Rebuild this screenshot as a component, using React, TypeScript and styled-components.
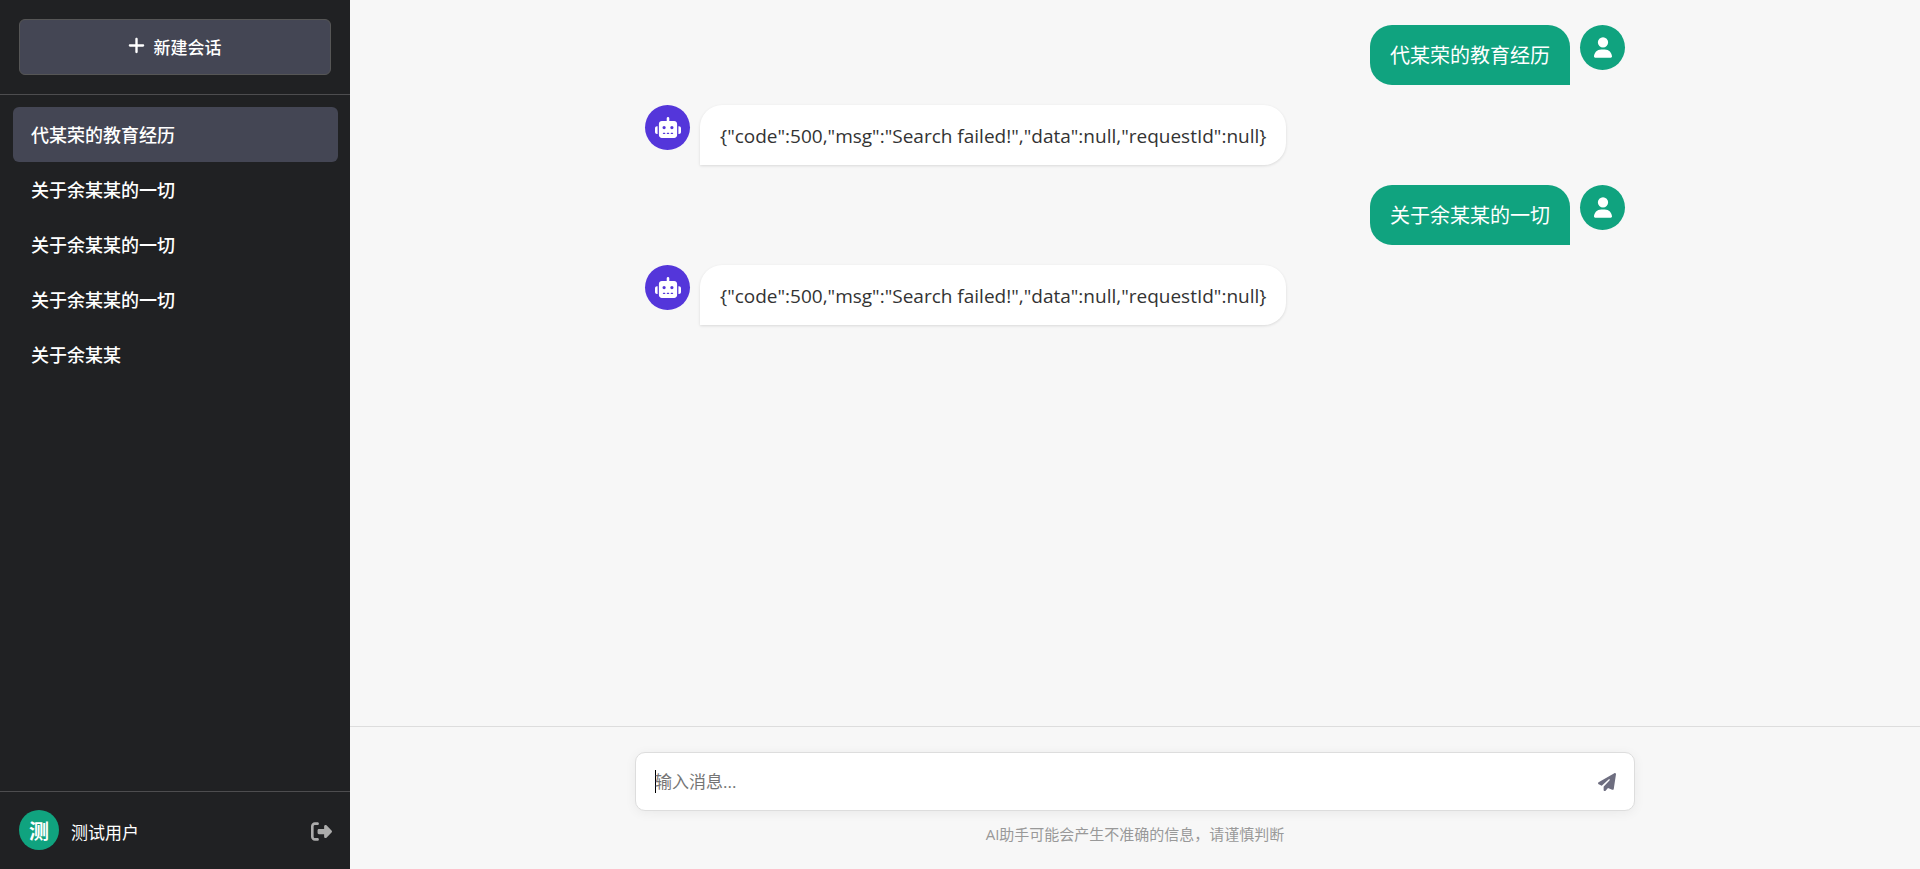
import React, { useState } from "react";
import styled, { createGlobalStyle } from "styled-components";
import { FaPlus, FaPaperPlane, FaRightFromBracket, FaRobot, FaUser } from "react-icons/fa6";

const GlobalStyle = createGlobalStyle`
  * { box-sizing: border-box; }
  body { margin: 0; }
  body, button, input {
    font-family: "Segoe UI", "Open Sans", "Noto Sans CJK SC", sans-serif;
  }
`;

const Page = styled.div`
  display: flex;
  height: 100vh;
  background: #f7f7f7;
  color: #343541;
`;

const Sidebar = styled.aside`
  flex: 0 0 350px;
  display: flex;
  flex-direction: column;
  background: #202123;
  color: #fff;
`;

const SidebarHeader = styled.div`
  padding: 19px;
  border-bottom: 1px solid #4d4d4f;
`;

const NewChatButton = styled.button`
  display: flex;
  align-items: center;
  justify-content: center;
  gap: 8px;
  width: 100%;
  height: 56px;
  padding: 0 2px 2px 0;
  border: 1px solid #565656;
  border-radius: 6px;
  background: #444654;
  color: #fff;
  font-size: 17px;
  font-weight: 500;
  cursor: pointer;

  svg {
    width: 19px;
    height: 19px;
    margin-bottom: 2px;
  }
`;

const ChatList = styled.nav`
  flex: 1;
  display: flex;
  flex-direction: column;
  padding: 12px 12px 12px 13px;
  overflow-y: auto;
`;

const ChatItem = styled.button<{ $active: boolean }>`
  height: 55px;
  flex-shrink: 0;
  padding: 0 18px 1px;
  border: 0;
  border-radius: 6px;
  background: ${(p) => (p.$active ? "#444654" : "transparent")};
  color: #fff;
  font-size: 18px;
  font-weight: 500;
  text-align: left;
  cursor: pointer;
`;

const SidebarFooter = styled.div`
  display: flex;
  align-items: center;
  gap: 12px;
  padding: 18px 18px 19px 19px;
  border-top: 1px solid #4d4d4f;
`;

const UserBadge = styled.span`
  display: grid;
  place-items: center;
  width: 40px;
  height: 40px;
  border-radius: 50%;
  background: #10a37f;
  font-size: 20px;
  font-weight: 700;
`;

const UserName = styled.span`
  flex: 1;
  padding-top: 2px;
  font-size: 17px;
`;

const IconButton = styled.button<{ $color: string; $size: number }>`
  display: grid;
  place-items: center;
  padding: 0;
  border: 0;
  background: none;
  color: ${(p) => p.$color};
  font-size: ${(p) => p.$size}px;
  cursor: pointer;
`;

const LogoutButton = styled(IconButton)`
  padding-top: 2px;
`;

const Main = styled.main`
  flex: 1;
  min-width: 0;
  display: flex;
  flex-direction: column;
`;

const Scroller = styled.div`
  flex: 1;
  overflow-y: auto;
  padding: 25px 20px;
`;

const Thread = styled.div`
  display: flex;
  flex-direction: column;
  gap: 20px;
  max-width: 1000px;
  margin: 0 auto;
  padding: 0 10px;
`;

const MessageRow = styled.div<{ $user: boolean }>`
  display: flex;
  flex-direction: ${(p) => (p.$user ? "row-reverse" : "row")};
  align-items: flex-start;
  gap: 10px;
`;

const Avatar = styled.div<{ $user: boolean }>`
  display: grid;
  place-items: center;
  flex: 0 0 45px;
  height: 45px;
  border-radius: 50%;
  background: ${(p) => (p.$user ? "#10a37f" : "#5436da")};
  color: #fff;

  svg {
    width: ${(p) => (p.$user ? 18 : 26)}px;
    height: 21px;
  }
`;

const Bubble = styled.div<{ $user: boolean }>`
  padding: 16px 20px 14px;
  border-radius: ${(p) => (p.$user ? "22px 22px 0 22px" : "22px 22px 22px 0")};
  background: ${(p) => (p.$user ? "#10a37f" : "#fff")};
  box-shadow: ${(p) => (p.$user ? "none" : "0 1px 3px rgba(0, 0, 0, 0.12)")};
  color: ${(p) => (p.$user ? "#fff" : "#333")};
  font-size: ${(p) => (p.$user ? 20 : 19)}px;
  line-height: 30px;
  overflow-wrap: anywhere;
`;

const Composer = styled.form`
  padding: 25px 20px 24px;
  border-top: 1px solid #ddd;
`;

const InputBox = styled.div`
  display: flex;
  align-items: center;
  max-width: 1000px;
  height: 59px;
  margin: 0 auto;
  padding: 0 18px 0 19px;
  border: 1px solid #ddd;
  border-radius: 10px;
  background: #fff;
  box-shadow: 0 2px 12px rgba(0, 0, 0, 0.06);
`;

const Caret = styled.span`
  width: 1px;
  height: 23px;
  margin-right: -1px;
  background: #000;
`;

const MessageInput = styled.input`
  flex: 1;
  min-width: 0;
  padding: 0 0 1px;
  border: 0;
  outline: 0;
  background: none;
  color: #333;
  font-size: 17px;

  &:placeholder-shown {
    caret-color: transparent;
  }

  &::placeholder {
    color: #757575;
  }
`;

const Hint = styled.p`
  margin: 12px 0 0;
  color: #999;
  font-size: 15px;
  line-height: 22px;
  text-align: center;
`;

const chats = ["代某荣的教育经历", "关于余某某的一切", "关于余某某的一切", "关于余某某的一切", "关于余某某"];
const failure = '{"code":500,"msg":"Search failed!","data":null,"requestId":null}';
const messages = [
  { user: true, text: "代某荣的教育经历" },
  { user: false, text: failure },
  { user: true, text: "关于余某某的一切" },
  { user: false, text: failure },
];

export default function App() {
  const [active, setActive] = useState(0);
  const [draft, setDraft] = useState("");

  return (
    <>
      <GlobalStyle />
      <Page>
        <Sidebar>
          <SidebarHeader>
            <NewChatButton type="button">
              <FaPlus />
              新建会话
            </NewChatButton>
          </SidebarHeader>
          <ChatList>
            {chats.map((title, i) => (
              <ChatItem key={i} type="button" $active={i === active} onClick={() => setActive(i)}>
                {title}
              </ChatItem>
            ))}
          </ChatList>
          <SidebarFooter>
            <UserBadge>测</UserBadge>
            <UserName>测试用户</UserName>
            <LogoutButton type="button" aria-label="退出登录" $color="#acacac" $size={21}>
              <FaRightFromBracket />
            </LogoutButton>
          </SidebarFooter>
        </Sidebar>
        <Main>
          <Scroller>
            <Thread>
              {messages.map((m, i) => (
                <MessageRow key={i} $user={m.user}>
                  <Avatar $user={m.user}>{m.user ? <FaUser /> : <FaRobot />}</Avatar>
                  <Bubble $user={m.user}>{m.text}</Bubble>
                </MessageRow>
              ))}
            </Thread>
          </Scroller>
          <Composer onSubmit={(e) => e.preventDefault()}>
            <InputBox>
              {draft === "" && <Caret aria-hidden="true" />}
              <MessageInput
                autoFocus
                aria-label="输入消息"
                placeholder="输入消息..."
                value={draft}
                onChange={(e) => setDraft(e.target.value)}
              />
              <IconButton type="submit" aria-label="发送" $color="#6e6e80" $size={18}>
                <FaPaperPlane />
              </IconButton>
            </InputBox>
            <Hint>AI助手可能会产生不准确的信息，请谨慎判断</Hint>
          </Composer>
        </Main>
      </Page>
    </>
  );
}
